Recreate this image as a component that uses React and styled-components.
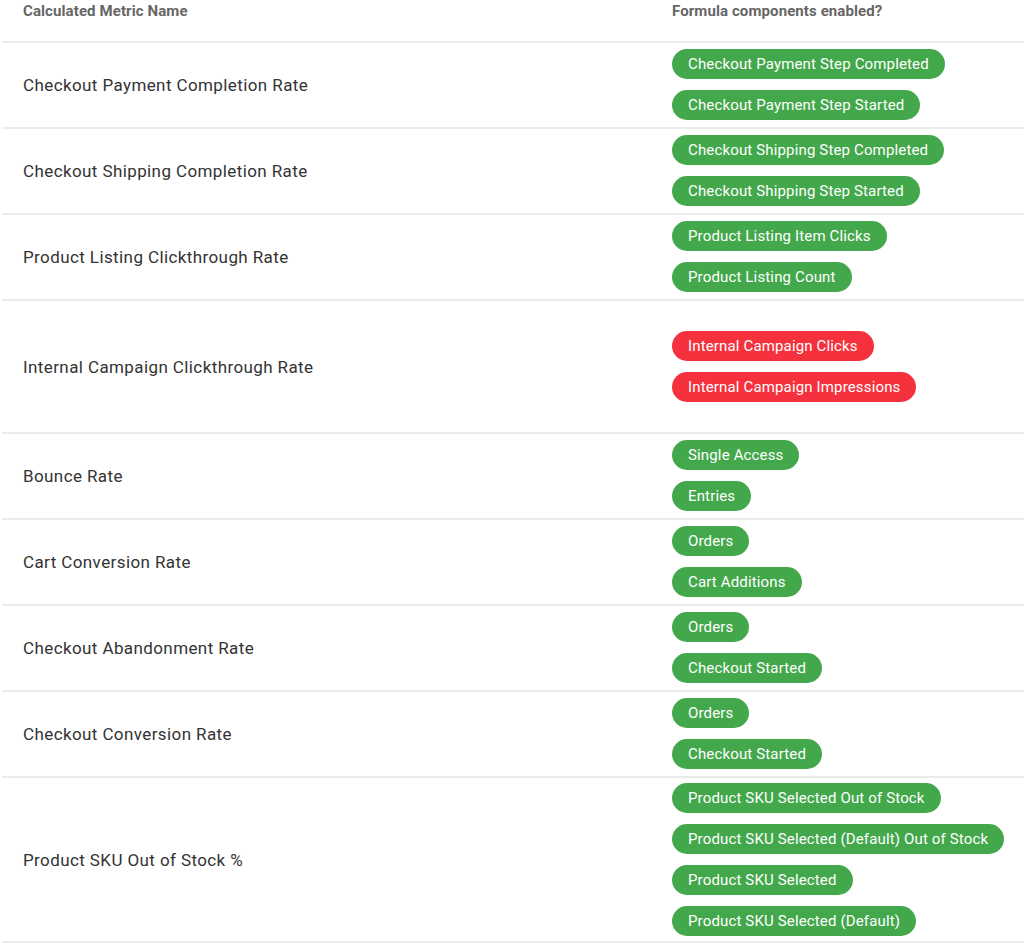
import React from "react";
import styled, { createGlobalStyle } from "styled-components";

const GlobalStyle = createGlobalStyle`
  body {
    margin: 0;
    background: #ffffff;
    font-family: Roboto, "Liberation Sans", sans-serif;
  }
`;

const Table = styled.div`
  margin-left: 2px;
  width: 1022px;
`;

const HeaderRow = styled.div`
  display: grid;
  grid-template-columns: 670px 1fr;
  height: 41px;
  border-bottom: 2px solid #ebebeb;
  box-sizing: content-box;
`;

const HeaderCell = styled.div`
  padding: 3px 0 0 ${(p) => (p.$first ? "21px" : "0")};
  font-size: 15px;
  font-weight: 700;
  line-height: 17px;
  letter-spacing: 0.1px;
  color: #666666;
`;

const Row = styled.div`
  display: grid;
  grid-template-columns: 670px 1fr;
  align-items: center;
  padding: ${(p) => p.$pad || "6px 0 7px"};
  border-bottom: 2px solid #ebebeb;
`;

const Name = styled.div`
  padding-left: 21px;
  font-size: 17px;
  letter-spacing: 0.4px;
  color: #333333;
`;

const Pills = styled.div`
  display: flex;
  flex-direction: column;
  align-items: flex-start;
  gap: 11px;
`;

const Pill = styled.span`
  display: inline-block;
  height: 30px;
  line-height: 30px;
  padding: 0 16px;
  border-radius: 15px;
  font-size: 15px;
  letter-spacing: 0.15px;
  color: #ffffff;
  white-space: nowrap;
  background: ${(p) => (p.$off ? "#f5313d" : "#43a84b")};
`;

const metrics = [
  {
    name: "Checkout Payment Completion Rate",
    parts: ["Checkout Payment Step Completed", "Checkout Payment Step Started"],
  },
  {
    name: "Checkout Shipping Completion Rate",
    parts: ["Checkout Shipping Step Completed", "Checkout Shipping Step Started"],
  },
  {
    name: "Product Listing Clickthrough Rate",
    parts: ["Product Listing Item Clicks", "Product Listing Count"],
  },
  {
    name: "Internal Campaign Clickthrough Rate",
    parts: ["Internal Campaign Clicks", "Internal Campaign Impressions"],
    off: true,
    pad: "30px 0",
  },
  { name: "Bounce Rate", parts: ["Single Access", "Entries"] },
  { name: "Cart Conversion Rate", parts: ["Orders", "Cart Additions"] },
  { name: "Checkout Abandonment Rate", parts: ["Orders", "Checkout Started"] },
  { name: "Checkout Conversion Rate", parts: ["Orders", "Checkout Started"] },
  {
    name: "Product SKU Out of Stock %",
    parts: [
      "Product SKU Selected Out of Stock",
      "Product SKU Selected (Default) Out of Stock",
      "Product SKU Selected",
      "Product SKU Selected (Default)",
    ],
    pad: "5px 0",
  },
];

const App = () => {
  return (
    <>
      <GlobalStyle />
      <Table>
        <HeaderRow>
          <HeaderCell $first>Calculated Metric Name</HeaderCell>
          <HeaderCell>Formula components enabled?</HeaderCell>
        </HeaderRow>
        {metrics.map((m) => (
          <Row key={m.name} $pad={m.pad}>
            <Name>{m.name}</Name>
            <Pills>
              {m.parts.map((p) => (
                <Pill key={p} $off={m.off}>
                  {p}
                </Pill>
              ))}
            </Pills>
          </Row>
        ))}
      </Table>
    </>
  );
};

export default App;
